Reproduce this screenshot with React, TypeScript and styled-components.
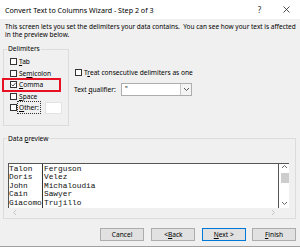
import React from "react"
import styled, { createGlobalStyle } from "styled-components"

const GlobalStyle = createGlobalStyle`
  html, body {
    margin: 0;
    padding: 0;
    background: #f0f0f0;
  }
  body {
    font-family: "Noto Sans", "Open Sans", sans-serif;
    color: #000;
  }
`

const Window = styled.div`
  width: 300px;
  height: 247px;
  background: #f0f0f0;
  display: flex;
  flex-direction: column;
  overflow: hidden;
  box-sizing: border-box;
  border-bottom: 1px solid #a0a0a0;
`

const TitleBar = styled.div`
  flex: none;
  height: 19px;
  background: #fff;
  display: flex;
  align-items: center;
  padding-left: 5px;
`

const Title = styled.div`
  flex: 1;
  font-size: 7.15px;
  white-space: nowrap;
`

const TitleButton = styled.div`
  width: 27px;
  height: 19px;
  display: flex;
  align-items: center;
  justify-content: center;
  font-size: 8px;
  color: #222;
`

const Body = styled.div`
  flex: 1;
  display: flex;
  flex-direction: column;
  padding: 4px 4px 0 3px;
`

const Intro = styled.div`
  margin-left: 2px;
  font-size: 6.5px;
  line-height: 8px;
  white-space: nowrap;
`

const OptionsRow = styled.div`
  display: flex;
  margin-top: 6px;
`

const GroupBox = styled.fieldset<{ $width?: number }>`
  margin: 0;
  min-width: 0;
  box-sizing: border-box;
  width: ${p => (p.$width ? `${p.$width}px` : "auto")};
  border: 1px solid #dcdcdc;
  padding: 0;
`

const Legend = styled.legend`
  font-size: 6.6px;
  line-height: 8px;
  padding: 0 1px;
  margin-left: 3px;
`

const DelimiterList = styled.div`
  display: flex;
  flex-direction: column;
  padding: 3px 0 11px 6px;
`

const CheckRow = styled.label<{ $h?: number }>`
  position: relative;
  display: flex;
  align-items: center;
  height: ${p => p.$h ?? 11.5}px;
  font-size: 6.6px;
  white-space: nowrap;
`

const Box = styled.span`
  flex: none;
  width: 7px;
  height: 7px;
  box-sizing: border-box;
  border: 1px solid #333;
  background: #fff;
  margin-right: 2px;
  display: flex;
  align-items: center;
  justify-content: center;
`

const Highlight = styled.span`
  position: absolute;
  left: -8px;
  top: -1.5px;
  width: 59px;
  height: 14px;
  box-sizing: border-box;
  border: 2px solid #e81123;
`

const FocusText = styled.span`
  outline: 1px dotted #333;
  outline-offset: 1px;
`

const OtherInput = styled.span`
  width: 17px;
  height: 12px;
  box-sizing: border-box;
  background: #fff;
  border: 1px solid #e3e3e3;
  margin-left: 6px;
`

const SideOptions = styled.div`
  display: flex;
  flex-direction: column;
  padding: 22px 0 0 6px;
`

const QualifierRow = styled.div`
  display: flex;
  align-items: center;
  margin-top: 5px;
  margin-left: -1px;
  font-size: 6.6px;
`

const QualifierLabel = styled.span`
  width: 47px;
  white-space: nowrap;
`

const Combo = styled.div`
  width: 71px;
  height: 13px;
  box-sizing: border-box;
  background: #fff;
  border: 1px solid #adadad;
  display: flex;
`

const ComboValue = styled.span`
  flex: 1;
  padding-left: 3px;
  font-size: 6.6px;
  line-height: 9px;
`

const ComboArrow = styled.span`
  width: 10px;
  border-left: 1px solid #c8c8c8;
  background: #f4f4f4;
  display: flex;
  align-items: center;
  justify-content: center;
`

const PreviewGroup = styled(GroupBox)`
  margin-top: 9px;
`

const PreviewInner = styled.div`
  padding: 20px 6px 0 4px;
  display: flex;
  flex-direction: column;
`

const Pane = styled.div`
  display: flex;
  height: 45px;
  background: #fff;
  border-top: 1px solid #555;
  border-left: 1px solid #555;
  box-sizing: border-box;
`

const Grid = styled.div`
  flex: 1;
  display: flex;
  border-right: 1px solid #555;
`

const Column = styled.div<{ $width?: number }>`
  width: ${p => (p.$width ? `${p.$width}px` : "auto")};
  flex: ${p => (p.$width ? "none" : 1)};
  border-right: ${p => (p.$width ? "1px solid #333" : "none")};
  padding: 1px 0 0 ${p => (p.$width ? 0 : 1)}px;
  font-family: "Liberation Mono", "DejaVu Sans Mono", monospace;
  font-size: 7.8px;
  line-height: 8.5px;
  color: #111;
`

const VScroll = styled.div`
  width: 10px;
  display: flex;
  flex-direction: column;
  align-items: center;
  background: #fff;
`

const Thumb = styled.div`
  width: 8px;
  height: 10px;
  background: #cdcdcd;
  margin-top: 1px;
  margin-left: 2px;
`

const ScrollSpacer = styled.div`
  flex: 1;
`

const ArrowCell = styled.div`
  height: 8px;
  display: flex;
  align-items: center;
  justify-content: center;
  margin-left: 1px;
`

const HScroll = styled.div`
  height: 10px;
  display: flex;
  align-items: center;
  justify-content: space-between;
  padding: 0 12px 0 4px;
`

const ButtonRow = styled.div`
  display: flex;
  justify-content: flex-end;
  gap: 6.3px;
  margin-top: 9px;
`

const Button = styled.div<{ $focused?: boolean; $spaced?: boolean }>`
  width: 44px;
  height: 13px;
  box-sizing: border-box;
  background: #e1e1e1;
  border: 1px solid ${p => (p.$focused ? "#0078d7" : "#adadad")};
  margin-right: ${p => (p.$spaced ? 1 : 0)}px;
  display: flex;
  align-items: center;
  justify-content: center;
  font-size: 6.6px;
  white-space: nowrap;
`

const Key = styled.span`
  text-decoration: underline;
`

const Chevron = ({ dir, color = "#555" }: { dir: "up" | "down" | "left" | "right"; color?: string }) => {
  const d = {
    up: "M1 4 L3.5 1.5 L6 4",
    down: "M1 2 L3.5 4.5 L6 2",
    left: "M4 1 L1.5 3.5 L4 6",
    right: "M2 1 L4.5 3.5 L2 6",
  }[dir]
  return (
    <svg width="7" height="7" viewBox="0 0 7 7">
      <path d={d} fill="none" stroke={color} strokeWidth="0.9" />
    </svg>
  )
}

const CheckBox = ({ checked }: { checked?: boolean }) => (
  <Box>
    {checked && (
      <svg width="5" height="5" viewBox="0 0 5 5">
        <path d="M0.5 2.6 L2 4 L4.6 0.9" fill="none" stroke="#222" strokeWidth="0.8" />
      </svg>
    )}
  </Box>
)

const firstNames = ["Talon", "Doris", "John", "Cain", "Giacomo"]
const lastNames = ["Ferguson", "Velez", "Michaloudia", "Sawyer", "Trujillo"]

export default function App() {
  return (
    <Window>
      <GlobalStyle />
      <TitleBar>
        <Title>Convert Text to Columns Wizard - Step 2 of 3</Title>
        <TitleButton>?</TitleButton>
        <TitleButton>
          <svg width="7" height="7" viewBox="0 0 7 7">
            <path d="M0.5 0.5 L6.5 6.5 M6.5 0.5 L0.5 6.5" stroke="#222" strokeWidth="0.8" />
          </svg>
        </TitleButton>
      </TitleBar>
      <Body>
        <Intro>
          This screen lets you set the delimiters your data contains.&nbsp; You can see how your text is affected
          <br />
          in the preview below.
        </Intro>
        <OptionsRow>
          <GroupBox $width={66}>
            <Legend>Delimiters</Legend>
            <DelimiterList>
              <CheckRow>
                <CheckBox />
                <span>
                  <Key>T</Key>ab
                </span>
              </CheckRow>
              <CheckRow>
                <CheckBox />
                <span>
                  Se<Key>m</Key>icolon
                </span>
              </CheckRow>
              <CheckRow>
                <Highlight />
                <CheckBox checked />
                <span>
                  <Key>C</Key>omma
                </span>
              </CheckRow>
              <CheckRow>
                <CheckBox />
                <span>
                  <Key>S</Key>pace
                </span>
              </CheckRow>
              <CheckRow>
                <CheckBox />
                <FocusText>
                  <Key>O</Key>ther:
                </FocusText>
                <OtherInput />
              </CheckRow>
            </DelimiterList>
          </GroupBox>
          <SideOptions>
            <CheckRow $h={11}>
              <CheckBox />
              <span>
                T<Key>r</Key>eat consecutive delimiters as one
              </span>
            </CheckRow>
            <QualifierRow>
              <QualifierLabel>
                Text <Key>q</Key>ualifier:
              </QualifierLabel>
              <Combo>
                <ComboValue>"</ComboValue>
                <ComboArrow>
                  <Chevron dir="down" color="#444" />
                </ComboArrow>
              </Combo>
            </QualifierRow>
          </SideOptions>
        </OptionsRow>
        <PreviewGroup>
          <Legend>
            Data <Key>p</Key>review
          </Legend>
          <PreviewInner>
            <Pane>
              <Grid>
                <Column $width={33}>
                  {firstNames.map(n => (
                    <div key={n}>{n}</div>
                  ))}
                </Column>
                <Column>
                  {lastNames.map(n => (
                    <div key={n}>{n}</div>
                  ))}
                </Column>
              </Grid>
              <VScroll>
                <ArrowCell>
                  <Chevron dir="up" />
                </ArrowCell>
                <Thumb />
                <ScrollSpacer />
                <ArrowCell>
                  <Chevron dir="down" />
                </ArrowCell>
              </VScroll>
            </Pane>
            <HScroll>
              <Chevron dir="left" color="#bdbdbd" />
              <Chevron dir="right" color="#bdbdbd" />
            </HScroll>
          </PreviewInner>
        </PreviewGroup>
        <ButtonRow>
          <Button $spaced>Cancel</Button>
          <Button>
            &lt; <Key>B</Key>ack
          </Button>
          <Button $focused>
            <Key>N</Key>ext &gt;
          </Button>
          <Button>
            <Key>F</Key>inish
          </Button>
        </ButtonRow>
      </Body>
    </Window>
  )
}
